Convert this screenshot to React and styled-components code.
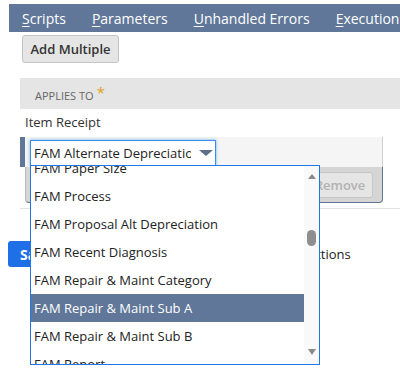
import React from 'react'
import styled, { createGlobalStyle } from 'styled-components'

const GlobalStyle = createGlobalStyle`
  body {
    margin: 0;
    font-family: "Open Sans", "Liberation Sans", sans-serif;
    background: #fff;
  }
`;

const items = [
	'FAM Paper Size',
	'FAM Process',
	'FAM Proposal Alt Depreciation',
	'FAM Recent Diagnosis',
	'FAM Repair & Maint Category',
	'FAM Repair & Maint Sub A',
	'FAM Repair & Maint Sub B',
	'FAM Report',
];

const tabs = [
	['S', 'cripts'],
	['P', 'arameters'],
	['U', 'nhandled Errors'],
	['E', 'xecution Log'],
];

function App() {
	return (
		<Page>
			<GlobalStyle />
			<NavBar>
				{tabs.map(([first, rest]) => (
					<NavItem key={first}>
						<u>{first}</u>{rest}
					</NavItem>
				))}
			</NavBar>

			<Content>
				<GreyButton>Add Multiple</GreyButton>

				<HeaderRow>
					APPLIES TO <Required>*</Required>
				</HeaderRow>
				<ItemRow>Item Receipt</ItemRow>

				<EditRow>
					<EditTop>
						<SelectBox>
							<SelectText>FAM Alternate Depreciation</SelectText>
							<Caret />
						</SelectBox>
					</EditTop>
					<EditBottom>
						<RemoveButton>Remove</RemoveButton>
					</EditBottom>
				</EditRow>
				<Divider />
			</Content>

			<Footer>
				<SaveButton>Save</SaveButton>
				<FooterText>Actions</FooterText>
			</Footer>

			<DropList>
				<Options>
					<OptionsInner>
						{items.map((name) => (
							<Option key={name} selected={name === 'FAM Repair & Maint Sub A'}>
								{name}
							</Option>
						))}
					</OptionsInner>
				</Options>
				<ScrollBar>
					<ArrowUp />
					<Thumb />
					<ArrowDown />
				</ScrollBar>
			</DropList>
		</Page>
	)
}

export default App


const Page = styled.div`
  position: relative;
  width: 400px;
  height: 374px;
  overflow: hidden;
`;

const NavBar = styled.nav`
  margin: 4px 0 0 9px;
  height: 28px;
  background: #607799;
  display: flex;
  align-items: center;
  gap: 26px;
  padding-left: 13px;
  white-space: nowrap;
  overflow: hidden;
`;

const NavItem = styled.span`
  color: #fff;
  font-size: 14px;
  u {
    text-decoration: underline;
    text-underline-offset: 2px;
  }
`;

const Content = styled.div`
  padding-left: 20px;
`;

const GreyButton = styled.button`
  margin: 3px 0 0 2px;
  height: 28px;
  width: 97px;
  padding: 0;
  background: #e5e5e5;
  border: 1px solid #c4c4c4;
  border-radius: 3px;
  font-family: "Open Sans", sans-serif;
  font-size: 13px;
  font-weight: 600;
  color: #333;
`;

const HeaderRow = styled.div`
  margin-top: 15px;
  height: 31px;
  background: #e5e5e5;
  display: flex;
  align-items: center;
  padding: 3px 0 0 15px;
  box-sizing: border-box;
  font-size: 11px;
  color: #666;
`;

const Required = styled.span`
  color: #e2a122;
  font-size: 15px;
  margin: -6px 0 0 3px;
`;

const ItemRow = styled.div`
  height: 26px;
  display: flex;
  align-items: center;
  padding-left: 5px;
  font-size: 13px;
  color: #333;
`;

const EditRow = styled.div`
  margin-top: 2px;
  width: 363px;
`;

const EditTop = styled.div`
  height: 30px;
  background: #f5f5f5;
  border-left: 5px solid #607799;
  border-right: 1px solid #d0d0d0;
  padding: 3px 0 0 5px;
  box-sizing: border-box;
`;

const SelectBox = styled.div`
  width: 186px;
  height: 26px;
  box-sizing: border-box;
  background: #fff;
  border: 1px solid #3a8ee6;
  box-shadow: 0 0 3px rgba(58, 142, 230, 0.7);
  display: flex;
  align-items: center;
  padding-left: 3px;
`;

const SelectText = styled.span`
  width: 157px;
  overflow: hidden;
  white-space: nowrap;
  font-size: 13px;
  color: #222;
`;

const Caret = styled.span`
  margin-left: 8px;
  width: 0;
  height: 0;
  border-left: 7px solid transparent;
  border-right: 7px solid transparent;
  border-top: 6px solid #5e6e88;
`;

const EditBottom = styled.div`
  margin-left: 5px;
  height: 36px;
  background: #d5d5d5;
  border: 1px solid #5f7596;
  border-left-color: #b8b8b8;
  border-top: none;
  border-radius: 0 0 4px 4px;
  box-sizing: border-box;
  display: flex;
  justify-content: flex-end;
  align-items: center;
  padding-right: 9px;
`;

const RemoveButton = styled.button`
  height: 26px;
  width: 66px;
  padding: 0;
  background: #e5e5e5;
  border: 1px solid #c6c6c6;
  border-radius: 3px;
  font-family: "Open Sans", sans-serif;
  font-size: 13px;
  font-weight: 600;
  color: #b2b2b2;
`;

const Divider = styled.div`
  margin-top: 5px;
  border-top: 1px solid #e3e3e3;
`;

const Footer = styled.div`
  display: flex;
  align-items: center;
  margin-top: 32px;
  padding-left: 8px;
`;

const SaveButton = styled.button`
  height: 26px;
  padding: 0 10px 0 12px;
  background: #1f6fe6;
  border: none;
  border-radius: 3px;
  font-family: "Open Sans", sans-serif;
  font-size: 14px;
  font-weight: 700;
  color: #fff;
`;

const FooterText = styled.span`
  margin-left: 244px;
  font-size: 13px;
  color: #222;
`;

const DropList = styled.div`
  position: absolute;
  left: 30px;
  top: 165px;
  width: 290px;
  height: 200px;
  box-sizing: border-box;
  border: 1px solid #2176e8;
  background: #fff;
  display: flex;
  overflow: hidden;
`;

const Options = styled.div`
  flex: 1;
  overflow: hidden;
`;

const OptionsInner = styled.div`
  margin-top: -12px;
`;

const Option = styled.div`
  height: 28px;
  display: flex;
  align-items: center;
  padding-left: 3px;
  white-space: nowrap;
  font-size: 13px;
  color: ${(p) => (p.selected ? '#fff' : '#222')};
  background: ${(p) => (p.selected ? '#607799' : 'transparent')};
`;

const ScrollBar = styled.div`
  width: 15px;
  background: #f9f9f9;
  display: flex;
  flex-direction: column;
  align-items: center;
`;

const ArrowUp = styled.span`
  margin-top: 8px;
  width: 0;
  height: 0;
  border-left: 4px solid transparent;
  border-right: 4px solid transparent;
  border-bottom: 5px solid #8a8a8a;
`;

const Thumb = styled.span`
  margin-top: 51px;
  width: 9px;
  height: 16px;
  border-radius: 5px;
  background: #8e8e8e;
`;

const ArrowDown = styled.span`
  margin-top: 103px;
  width: 0;
  height: 0;
  border-left: 4px solid transparent;
  border-right: 4px solid transparent;
  border-top: 6px solid #8a8a8a;
`;
